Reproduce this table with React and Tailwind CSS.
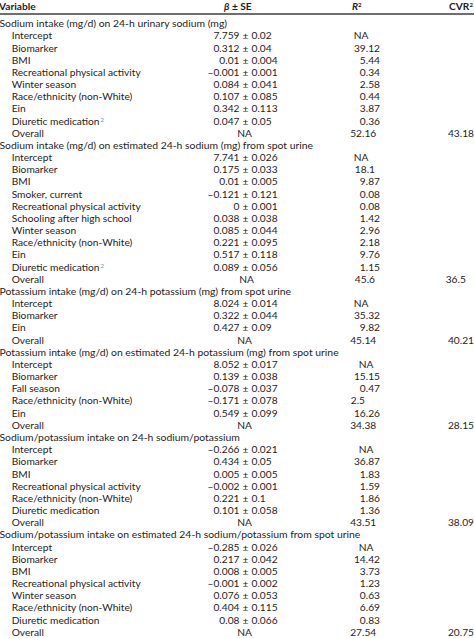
import React from "react";

const sections = [
  {
    title: "Sodium intake (mg/d) on 24-h urinary sodium (mg)",
    rows: [
      ["Intercept", "7.759", "0.02", "NA"],
      ["Biomarker", "0.312", "0.04", "39.12"],
      ["BMI", "0.01", "0.004", "5.44"],
      ["Recreational physical activity", "\u20130.001", "0.001", "0.34"],
      ["Winter season", "0.084", "0.041", "2.58"],
      ["Race/ethnicity (non-White)", "0.107", "0.085", "0.44"],
      ["Ein", "0.342", "0.113", "3.87"],
      ["Diuretic medication", "0.047", "0.05", "0.36", true],
    ],
    overall: ["52.16", "43.18"],
  },
  {
    title: "Sodium intake (mg/d) on estimated 24-h sodium (mg) from spot urine",
    rows: [
      ["Intercept", "7.741", "0.026", "NA"],
      ["Biomarker", "0.175", "0.033", "18.1"],
      ["BMI", "0.01", "0.005", "9.87"],
      ["Smoker, current", "\u20130.121", "0.121", "0.08"],
      ["Recreational physical activity", "0", "0.001", "0.08"],
      ["Schooling after high school", "0.038", "0.038", "1.42"],
      ["Winter season", "0.085", "0.044", "2.96"],
      ["Race/ethnicity (non-White)", "0.221", "0.095", "2.18"],
      ["Ein", "0.517", "0.118", "9.76"],
      ["Diuretic medication", "0.089", "0.056", "1.15", true],
    ],
    overall: ["45.6", "36.5"],
  },
  {
    title: "Potassium intake (mg/d) on 24-h potassium (mg) from spot urine",
    rows: [
      ["Intercept", "8.024", "0.014", "NA"],
      ["Biomarker", "0.322", "0.044", "35.32"],
      ["Ein", "0.427", "0.09", "9.82"],
    ],
    overall: ["45.14", "40.21"],
  },
  {
    title: "Potassium intake (mg/d) on estimated 24-h potassium (mg) from spot urine",
    rows: [
      ["Intercept", "8.052", "0.017", "NA"],
      ["Biomarker", "0.139", "0.038", "15.15"],
      ["Fall season", "\u20130.078", "0.037", "0.47"],
      ["Race/ethnicity (non-White)", "\u20130.171", "0.078", "2.5"],
      ["Ein", "0.549", "0.099", "16.26"],
    ],
    overall: ["34.38", "28.15"],
  },
  {
    title: "Sodium/potassium intake on 24-h sodium/potassium",
    rows: [
      ["Intercept", "\u20130.266", "0.021", "NA"],
      ["Biomarker", "0.434", "0.05", "36.87"],
      ["BMI", "0.005", "0.005", "1.83"],
      ["Recreational physical activity", "\u20130.002", "0.001", "1.59"],
      ["Race/ethnicity (non-White)", "0.221", "0.1", "1.86"],
      ["Diuretic medication", "0.101", "0.058", "1.36"],
    ],
    overall: ["43.51", "38.09"],
  },
  {
    title: "Sodium/potassium intake on estimated 24-h sodium/potassium from spot urine",
    rows: [
      ["Intercept", "\u20130.285", "0.026", "NA"],
      ["Biomarker", "0.217", "0.042", "14.42"],
      ["BMI", "0.008", "0.005", "3.73"],
      ["Recreational physical activity", "\u20130.001", "0.002", "1.23"],
      ["Winter season", "0.076", "0.053", "0.63"],
      ["Race/ethnicity (non-White)", "0.404", "0.115", "6.69"],
      ["Diuretic medication", "0.08", "0.066", "0.83"],
    ],
    overall: ["27.54", "20.75"],
  },
];

function r2Class(v, si) {
  if (v === "NA") return si < 3 ? "pr-[11.5px]" : "pr-[6.5px]";
  if (v === "2.5") return "pr-[15px]";
  if (/^\d+\.\d$/.test(v)) return "pr-[5px]";
  return "pr-0";
}

function Row({ children }) {
  return <div className="flex h-[12.18px] items-center whitespace-nowrap leading-none">{children}</div>;
}

export default function App() {
  return (
    <div className="w-[474px] h-[638px] overflow-hidden bg-white font-['Lato','Open_Sans',sans-serif] text-[10.2px] text-[#1f1c1d]">
      <div className="flex h-[11.4px] items-center whitespace-nowrap font-bold leading-none">
        <div className="w-[225px] -ml-[1px]">Variable</div>
        <div className="w-[128px]">
          <span className="italic">β</span> ± SE
        </div>
        <div className="w-[97px] italic">
          R<sup className="text-[6px] not-italic">2</sup>
        </div>
        <div>
          CVR<sup className="text-[6px]">2</sup>
        </div>
      </div>
      <div className="mt-[1.9px] mb-[1.9px] h-[2px] bg-[#6f6f6f]" />
      {sections.map((s, si) => (
        <div key={si}>
          <Row>
            <div className="-ml-[0.5px] text-[10.4px]">{s.title}</div>
          </Row>
          {s.rows.map((r, ri) => (
            <Row key={ri}>
              <div className="w-[206px] pl-[11.7px]">
                {r[0]}
                {r[4] && <sup className="ml-[1px] text-[6px] text-[#6f8fe0]">2</sup>}
              </div>
              <div className="w-[33.5px] text-right">{r[1]}</div>
              <div className="w-[12px] text-center">±</div>
              <div className="w-[88.5px]">{r[2]}</div>
              <div className={"w-[40px] text-right " + r2Class(r[3], si)}>{r[3]}</div>
            </Row>
          ))}
          <Row>
            <div className="w-[206px] pl-[11.7px]">Overall</div>
            <div className="w-[134px] pl-[33.3px]">NA</div>
            <div className={"w-[40px] text-right " + r2Class(s.overall[0], si)}>{s.overall[0]}</div>
            <div className={s.overall[1] === "36.5" ? "pl-[65.7px]" : "pl-[71.7px]"}>{s.overall[1]}</div>
          </Row>
        </div>
      ))}
    </div>
  );
}
